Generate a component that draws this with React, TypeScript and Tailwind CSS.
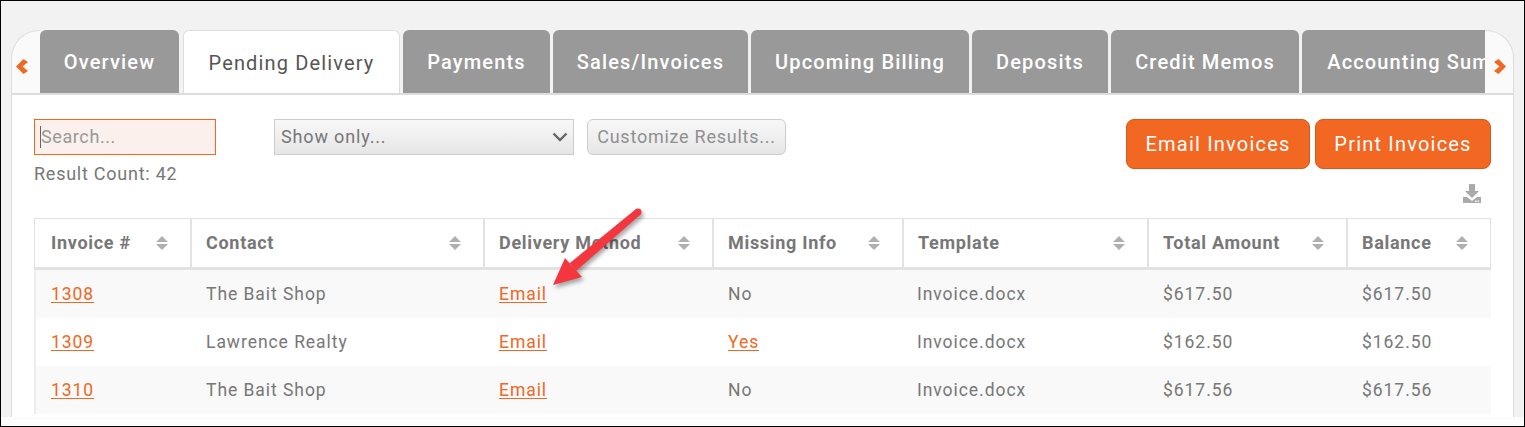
const TABS = [
  { label: "Overview", width: "w-[139px] mr-px" },
  { label: "Pending Delivery", width: "w-[217px]", active: true },
  { label: "Payments", width: "w-[147px]" },
  { label: "Sales/Invoices", width: "w-[195px]" },
  { label: "Upcoming Billing", width: "w-[218px]" },
  { label: "Deposits", width: "w-[136px]" },
  { label: "Credit Memos", width: "w-[188px]" },
  { label: "Accounting Summary", width: "w-[264px]" },
];

const COLUMNS = [
  { label: "Invoice #", width: "w-[156px]" },
  { label: "Contact", width: "w-[293px]" },
  { label: "Delivery Method", width: "w-[229px]" },
  { label: "Missing Info", width: "w-[190px]" },
  { label: "Template", width: "w-[245px]" },
  { label: "Total Amount", width: "w-[199px]" },
  { label: "Balance", width: "w-[145px]" },
];

const ROWS = [
  { id: "1308", contact: "The Bait Shop", missing: "No", total: "$617.50" },
  { id: "1309", contact: "Lawrence Realty", missing: "Yes", total: "$162.50" },
  { id: "1310", contact: "The Bait Shop", missing: "No", total: "$617.56" },
];

function SortIcon() {
  return (
    <svg width="12" height="16" viewBox="0 0 12 16" className="mt-[2px] shrink-0 fill-[#b0b0b0]">
      <path d="M6 1l6 6H0zM0 9h12l-6 6z" />
    </svg>
  );
}

function Chevron({ flip }: { flip?: boolean }) {
  return (
    <svg width="12" height="15" viewBox="0 0 12 15" className={`mt-[8px] fill-[#f26722] ${flip ? "-scale-x-100" : ""}`}>
      <path d="M7.5 0L12 3 6.5 7.5 12 12l-4.5 3L0 7.5z" />
    </svg>
  );
}

function OrangeLink({ children }: { children: React.ReactNode }) {
  return <span className="text-[#f26722] underline underline-offset-2">{children}</span>;
}

export default function App() {
  return (
    <div className="flex h-[427px] w-[1525px] flex-col overflow-hidden border border-black bg-[#fcfcfc] font-['Roboto',sans-serif] text-[#777777]">
      <div className="h-[416px] shrink-0 overflow-hidden bg-[#f2f2f2] pl-2.5 pt-[29px]">
        <div className="flex h-[63px] w-[1503px]">
          <div className="flex w-[29px] shrink-0 items-center rounded-tl-[28px] border-l border-t border-[#dddddd] bg-[#fafafa] pl-[4px]">
            <Chevron />
          </div>
          <div className="flex min-w-0 flex-1 gap-[3px] overflow-hidden">
            {TABS.map((tab) => (
              <div
                key={tab.label}
                className={`flex shrink-0 items-center justify-center whitespace-nowrap rounded-t-md pt-px text-[20px] tracking-[1.15px] ${tab.width} ${
                  tab.active
                    ? "border-x border-t border-[#dddddd] bg-white font-normal text-[#555555]"
                    : "bg-[#999999] font-medium text-white"
                }`}
              >
                {tab.label}
              </div>
            ))}
          </div>
          <div className="flex w-[29px] shrink-0 items-center justify-end rounded-tr-[28px] border-r border-t border-[#dddddd] bg-[#fafafa] pr-[7px]">
            <Chevron flip />
          </div>
        </div>

        <div className="relative h-[340px] w-[1503px] border-x border-t-2 border-[#dddddd] bg-white px-[22px] pt-[24px]">
          <div className="flex h-[99px] items-start">
            <div className="w-[182px] shrink-0">
              <div className="flex h-[36px] items-center border border-[#f26722] bg-[#fbf0ec] pb-px text-[18px] tracking-[0.6px] text-[#999999]">
                <span className="ml-[5px] h-[22px] w-[1px] bg-[#666666]" />
                Search...
              </div>
              <div className="mt-[5px] whitespace-nowrap text-[18px] tracking-[0.75px]">Result Count: 42</div>
            </div>
            <div className="ml-[58px] flex h-[36px] w-[300px] shrink-0 items-center justify-between border border-[#cccccc] bg-gradient-to-b from-[#f8f8f8] to-[#e6e6e6] pb-px pl-[6px] pr-[5px] text-[18px] tracking-[0.85px]">
              Show only...
              <svg width="16" height="10" viewBox="0 0 16 10" fill="none" stroke="#666666" strokeWidth="2.4">
                <path d="M1.5 1.5L8 8l6.5-6.5" />
              </svg>
            </div>
            <div className="ml-[13px] flex h-[36px] w-[199px] shrink-0 items-center justify-center rounded-md border border-[#cccccc] bg-gradient-to-b from-[#f8f8f8] to-[#e6e6e6] pb-px text-[18px] tracking-[0.75px] text-[#909090]">
              Customize Results...
            </div>
            <div className="ml-auto flex flex-col items-end">
              <div className="flex gap-[5px]">
                <div className="flex h-[50px] w-[184px] items-center justify-center rounded-lg border border-[#d9581a] bg-[#f26722] text-[20px] tracking-[1.2px] text-white">
                  Email Invoices
                </div>
                <div className="flex h-[50px] w-[176px] items-center justify-center rounded-lg border border-[#d9581a] bg-[#f26722] text-[20px] tracking-[1.2px] text-white">
                  Print Invoices
                </div>
              </div>
              <svg width="20" height="20" viewBox="0 0 20 20" className="mr-[9px] mt-[15px] fill-[#aaaaaa]">
                <path d="M7 0h6v7h4l-7 7-7-7h4z" />
                <path d="M1 13h4l5 4 5-4h4v6H1z" />
                <path d="M13 16.5h1.5V18H13zM15.5 16.5H17V18h-1.5z" fill="#ffffff" />
              </svg>
            </div>
          </div>

          <table className="w-[1457px] table-fixed border-separate border-spacing-0 text-left">
            <thead>
              <tr className="h-[52px]">
                {COLUMNS.map((col) => (
                  <th
                    key={col.label}
                    className={`border-b-[3px] border-l-2 border-t border-[#e2e2e2] pb-[2px] pl-[14px] first:border-l first:pl-[16px] last:border-r ${col.width}`}
                  >
                    <div className="flex items-center justify-between whitespace-nowrap pr-[22px] text-[18px] font-bold tracking-[0.7px]">
                      {col.label}
                      <SortIcon />
                    </div>
                  </th>
                ))}
              </tr>
            </thead>
            <tbody className="text-[17.5px] tracking-[0.95px]">
              {ROWS.map((row) => (
                <tr key={row.id} className="h-[48px] odd:bg-[#f9f9f9]">
                  <td className="border-l-2 border-[#eeeeee] pl-[15px]"><OrangeLink>{row.id}</OrangeLink></td>
                  <td className="pl-[16px]">{row.contact}</td>
                  <td className="pl-[16px]"><OrangeLink>Email</OrangeLink></td>
                  <td className="pl-[16px]">{row.missing === "Yes" ? <OrangeLink>Yes</OrangeLink> : row.missing}</td>
                  <td className="pl-[15px]">Invoice.docx</td>
                  <td className="pl-[16px]">{row.total}</td>
                  <td className="pl-[16px]">{row.total}</td>
                </tr>
              ))}
            </tbody>
          </table>

          {/* red callout arrow pasted over the table */}
          <svg
            width="110"
            height="95"
            viewBox="0 0 110 95"
            className="absolute left-[530px] top-[111px] drop-shadow-[2px_3px_2px_rgba(0,0,0,0.35)]"
          >
            <circle cx="96" cy="6" r="3.5" fill="#f4373f" />
            <path d="M98.3 8.7L34.3 64.8 27.7 57.2 93.7 3.3z" fill="#f4373f" />
            <path d="M11 79L23 52 40 71z" fill="#f4373f" />
          </svg>
        </div>
      </div>
    </div>
  );
}
